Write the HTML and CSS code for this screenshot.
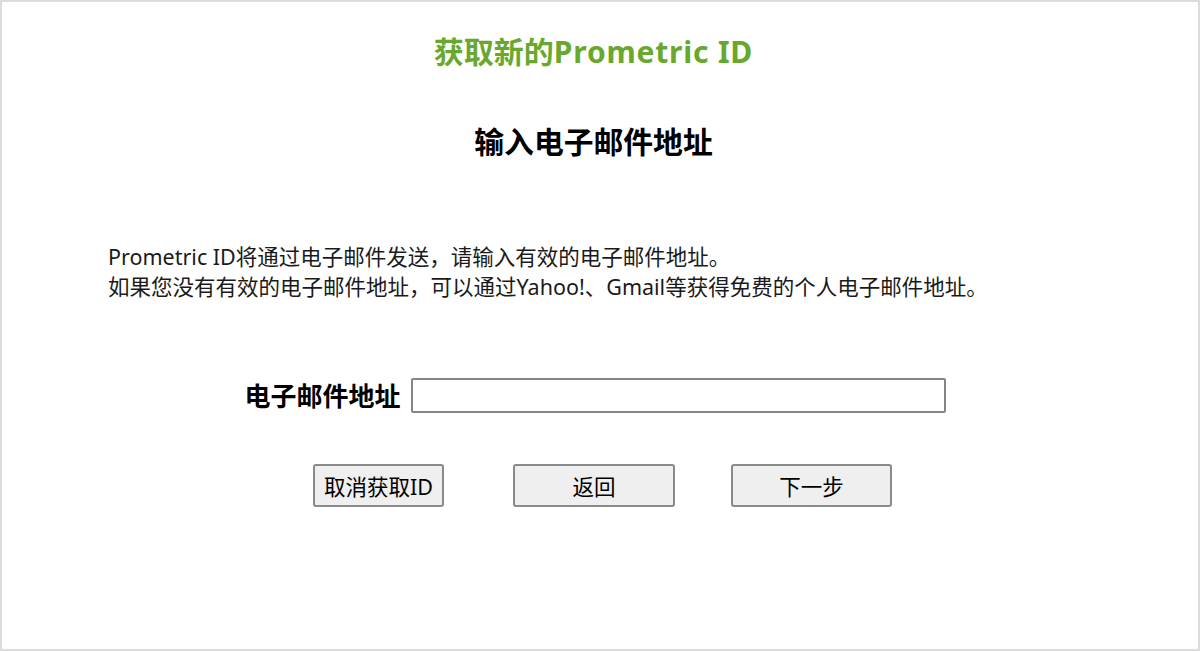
FILE: index.html
```html
<!DOCTYPE html>
<html lang="zh-CN">
<head>
    <meta charset="UTF-8">
    <meta name="viewport" content="width=device-width, initial-scale=1.0">
    <title>获取新的Prometric ID</title>
    <link rel="stylesheet" href="styles.css">
</head>
<body>
    <div class="page">
        <h1 class="page-title">获取新的<span class="brand">Prometric ID</span></h1>
        <h2 class="step-title">输入电子邮件地址</h2>

        <p class="notice">
            Prometric ID将通过电子邮件发送，请输入有效的电子邮件地址。<br>
            如果您没有有效的电子邮件地址，可以通过Yahoo!、Gmail等获得免费的个人电子邮件地址。
        </p>

        <div class="email-row">
            <label class="email-label" for="email">电子邮件地址</label>
            <input class="email-input" id="email" type="text">
        </div>

        <div class="actions">
            <button class="btn btn-cancel">取消获取ID</button>
            <button class="btn btn-back">返回</button>
            <button class="btn btn-next">下一步</button>
        </div>
    </div>
</body>
</html>
```

FILE: styles.css
```css
html, body {
    margin: 0;
    height: 100%;
}

body {
    font-family: "Noto Sans", "Noto Sans CJK SC", sans-serif;
    color: #111;
    background-color: #fff;
}

.page {
    box-sizing: border-box;
    height: 651px;
    border: 2px solid #dcdcdc;
    padding: 30px 0 0 0;
}

.page-title {
    margin: 0;
    font-size: 30px;
    line-height: 40px;
    font-weight: bold;
    color: #67a82d;
    text-align: center;
    padding-right: 13px;
}

.page-title .brand {
    letter-spacing: 0.8px;
}

.step-title {
    margin: 50px 0 0 0;
    font-size: 29.8px;
    line-height: 40px;
    font-weight: bold;
    color: #000;
    text-align: center;
    padding-right: 13px;
}

.notice {
    margin: 80px 0 0 0;
    padding-left: 106px;
    font-size: 21.5px;
    line-height: 30px;
    color: #1a1a1a;
}

.email-row {
    display: flex;
    align-items: center;
    justify-content: center;
    gap: 10px;
    margin-top: 74px;
    padding-right: 10px;
}

.email-label {
    font-size: 26px;
    font-weight: bold;
    color: #000;
}

.email-input {
    box-sizing: border-box;
    width: 535px;
    height: 35px;
    border: 2px solid #858585;
    border-radius: 2px;
    background: #fff;
    font-size: 20px;
    padding: 0 6px;
}

.actions {
    display: flex;
    justify-content: center;
    margin-top: 50px;
    padding-left: 5px;
}

.btn {
    box-sizing: border-box;
    height: 43px;
    padding: 0;
    border: 2px solid #8a8a8a;
    border-radius: 3px;
    background-color: #efefef;
    font-family: "Noto Sans", "Noto Sans CJK SC", sans-serif;
    font-size: 21.5px;
    color: #000;
    cursor: pointer;
}

.btn-cancel {
    width: 131px;
    margin-right: 69px;
}

.btn-back {
    width: 162px;
}

.btn-next {
    width: 161px;
    margin-left: 56px;
}
```
